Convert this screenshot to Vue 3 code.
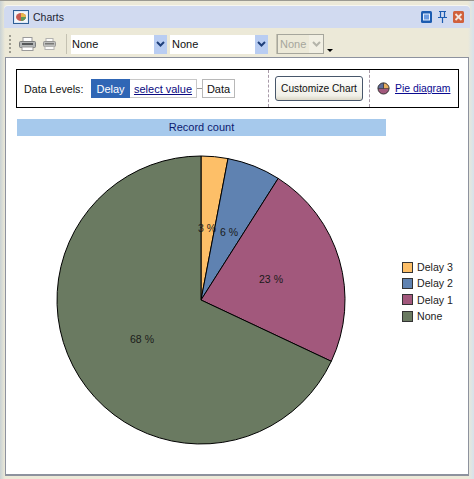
<script setup>
const cx = 201, cy = 300, r = 144
const pt = (deg) => {
  const a = (deg * Math.PI) / 180
  return [cx + r * Math.sin(a), cy - r * Math.cos(a)]
}
const slice = (from, to) => {
  const [x1, y1] = pt(from)
  const [x2, y2] = pt(to)
  const large = to - from > 180 ? 1 : 0
  return `M${cx} ${cy} L${x1.toFixed(1)} ${y1.toFixed(1)} A${r} ${r} 0 ${large} 1 ${x2.toFixed(1)} ${y2.toFixed(1)} Z`
}
const slices = [
  { name: 'Delay 3', color: '#fdbf68', from: 0, to: 10.8, label: '3 %', lx: 207, ly: 232 },
  { name: 'Delay 2', color: '#5f82b1', from: 10.8, to: 32.4, label: '6 %', lx: 229, ly: 236 },
  { name: 'Delay 1', color: '#a2587c', from: 32.4, to: 115.2, label: '23 %', lx: 271, ly: 283 },
  { name: 'None', color: '#6a7a61', from: 115.2, to: 360, label: '68 %', lx: 142, ly: 343 },
]
</script>

<template>
  <div class="window">
    <div class="title">
      <svg class="app-icon" width="16" height="14" viewBox="0 0 16 14">
        <rect x="0.5" y="0.5" width="15" height="13" fill="#dfe8f5" stroke="#2f5f96" />
        <rect x="2" y="2" width="12" height="10" fill="#f4f6f8" />
        <ellipse cx="8" cy="7" rx="5" ry="4" fill="#c85a50" />
        <path d="M8 7L13 7A5 4 0 0 1 8 11Z" fill="#5f9a5a" />
        <path d="M8 7L8 3A5 4 0 0 1 13 7Z" fill="#e8b84a" />
      </svg>
      <span class="title-text">Charts</span>
      <span class="title-buttons">
        <svg width="11" height="12" viewBox="0 0 11 12"><rect width="11" height="12" rx="1.500" fill="#1d5cb0" /><rect x="2.500" y="3" width="6" height="6" fill="#6d9be0" stroke="#e6eefb" /></svg>
        <svg width="11" height="12" viewBox="0 0 11 12"><path d="M2 .5H9M3.500 .5V6M7.500 .5V6M1 6.500H10M5.500 6.500V12" fill="none" stroke="#1d5cb0" stroke-width="1.200" /></svg>
        <svg width="11" height="12" viewBox="0 0 11 12"><rect width="11" height="12" rx="1.500" fill="#d0603c" /><path d="M2.500 3L8.500 9M8.500 3L2.500 9" stroke="#f3e6e0" stroke-width="1.800" /></svg>
      </span>
    </div>

    <div class="toolbar">
      <span class="grip"></span>
      <svg class="printer" width="17" height="14" viewBox="0 0 17 14">
        <rect x="4" y="0.5" width="9" height="4" fill="#fff" stroke="#9a9a9a" />
        <rect x="0.5" y="4.500" width="16" height="6" rx="1" fill="#b5b8b8" stroke="#7d7f7f" />
        <rect x="3" y="6" width="11" height="2" fill="#55585a" />
        <rect x="3" y="10" width="11" height="3.500" fill="#fff" stroke="#9a9a9a" />
      </svg>
      <svg class="printer small" width="13" height="12" viewBox="0 0 13 12">
        <rect x="3" y="0.5" width="7" height="3" fill="#fff" stroke="#aaa" />
        <rect x="0.500" y="3.500" width="12" height="5" rx="1" fill="#b8baba" stroke="#888" />
        <rect x="2" y="5" width="9" height="1.500" fill="#666" />
        <rect x="2" y="8.500" width="9" height="3" fill="#fff" stroke="#aaa" />
      </svg>
      <span class="tb-sep first"></span>
      <div class="select one">
        <span>None</span>
        <span class="arrow"><svg width="9" height="6" viewBox="0 0 9 6"><path d="M1 1L4.500 4.500L8 1" fill="none" stroke="#1f3f7a" stroke-width="2" /></svg></span>
      </div>
      <div class="select two">
        <span>None</span>
        <span class="arrow"><svg width="9" height="6" viewBox="0 0 9 6"><path d="M1 1L4.500 4.500L8 1" fill="none" stroke="#1f3f7a" stroke-width="2" /></svg></span>
      </div>
      <span class="tb-sep second"></span>
      <div class="select-off">
        <span>None</span>
        <span class="arrow-off"><svg width="9" height="6" viewBox="0 0 9 6"><path d="M1 1L4.500 4.500L8 1" fill="none" stroke="#b4b4aa" stroke-width="2" /></svg></span>
      </div>
      <span class="more"></span>
    </div>

    <div class="content">
      <div class="panel">
        <div class="levels">
          <span class="levels-label">Data Levels:</span>
          <span class="chip active">Delay</span>
          <a class="chip link">select value</a>
          <span class="conn"></span>
          <span class="chip plain">Data</span>
        </div>
        <div class="custom"><button class="btn">Customize Chart</button></div>
        <div class="diagram">
          <svg width="13" height="13" viewBox="0 0 13 13">
            <circle cx="6.500" cy="6.500" r="5.500" fill="#a2587c" stroke="#333" />
            <path d="M6.500 6.500L6.500 1A5.500 5.500 0 0 1 12 6.500Z" fill="#e8b060" stroke="#333" stroke-width=".6" />
            <path d="M6.500 6.500L1 6.500A5.500 5.500 0 0 1 6.500 1Z" fill="#5f6f9a" stroke="#333" stroke-width=".6" />
          </svg>
          <a class="pie-link">Pie diagram</a>
        </div>
      </div>

      <div class="chart-title">Record count</div>

      <div class="chart-row">
        <svg class="pie" width="384" height="337" viewBox="17 136 384 337">
          <path v-for="s in slices" :key="s.name" :d="slice(s.from, s.to)" :fill="s.color" stroke="#000" stroke-width="1" />
          <text v-for="s in slices" :key="s.label" :x="s.lx" :y="s.ly" class="pct" text-anchor="middle">{{ s.label }}</text>
        </svg>
        <ul class="legend">
          <li v-for="s in slices" :key="s.name">
            <i class="swatch" :style="{ background: s.color }"></i>{{ s.name }}
          </li>
        </ul>
      </div>
    </div>
  </div>
</template>

<style scoped>
.window {
  width: 474px;
  height: 479px;
  box-sizing: border-box;
  padding: 5px 0 0;
  background: linear-gradient(90deg, #c9d2d4 0, #ece9d8 5px, #ece9d8 468px, #d6e2ec 474px);
  border-top: 1px solid #9b9a92;
  font-family: "Liberation Sans", Arial, sans-serif;
  font-size: 11px;
  color: #111;
  display: flex;
  flex-direction: column;
  overflow: hidden;
}
.title {
  height: 22px;
  flex: none;
  margin: 0 4px;
  padding: 0 6px 0 9px;
  background: #d1daf0;
  border-radius: 4px 4px 0 0;
  box-shadow: 0 -1px 0 #f6f6f0;
  display: flex;
  align-items: center;
  gap: 4px;
}
.title-text {
  color: #1c2433;
  font-size: 10.500px;
}
.title-buttons {
  margin-left: auto;
  display: flex;
  gap: 5px;
}
.toolbar {
  height: 29px;
  flex: none;
  box-sizing: border-box;
  margin: 0 5px;
  padding: 3px 0 0 4px;
  display: flex;
  align-items: center;
}
.grip {
  width: 2px;
  height: 18px;
  background: repeating-linear-gradient(180deg, #9d9c90 0 2px, transparent 2px 4px);
}
.printer {
  margin-left: 8px;
}
.printer.small {
  margin-left: 7px;
  opacity: 0.85;
}
.tb-sep {
  width: 1px;
  height: 20px;
  background: #c5c2b2;
}
.tb-sep.first {
  margin: 0 4px 0 10px;
}
.tb-sep.second {
  margin: 0 0 0 8px;
}
.select {
  height: 19px;
  background: #fff;
  display: flex;
  align-items: center;
  justify-content: space-between;
  padding-left: 1px;
  box-sizing: border-box;
}
.select.one {
  width: 96px;
  margin-right: 3px;
}
.select.two {
  width: 98px;
  padding-left: 2px;
}
.arrow {
  width: 13px;
  height: 19px;
  background: #b9cdf2;
  display: flex;
  align-items: center;
  justify-content: center;
}
.select-off {
  width: 47px;
  height: 20px;
  box-sizing: border-box;
  border: 1px solid #a6a69c;
  background: #ece9d8;
  color: #a6a69c;
  display: flex;
  align-items: center;
  justify-content: space-between;
  padding-left: 2px;
}
.arrow-off {
  width: 14px;
  height: 18px;
  background: #f1efe3;
  display: flex;
  align-items: center;
  justify-content: center;
}
.more {
  width: 0;
  height: 0;
  margin: 13px 0 0 3px;
  border-left: 3px solid transparent;
  border-right: 3px solid transparent;
  border-top: 3px solid #000;
}
.content {
  flex: 1;
  margin: 0 5px 3px;
  border: 1px solid #8d929e;
  border-bottom-width: 2px;
  background: #fff;
  min-height: 0;
  padding: 11px 9px 0 10px;
}
.panel {
  height: 39px;
  box-sizing: border-box;
  width: 443px;
  border: 1px solid #000;
  display: flex;
  align-items: stretch;
}
.levels {
  width: 252px;
  flex: none;
  box-sizing: border-box;
  padding-left: 7px;
  display: flex;
  align-items: center;
  border-right: 1px dashed #a89aa8;
}
.levels-label {
  width: 67px;
  flex: none;
  font-size: 10.700px;
}
.chip {
  height: 19px;
  flex: none;
  box-sizing: border-box;
  display: flex;
  align-items: center;
  justify-content: center;
}
.active {
  width: 39px;
  background: #2f66b5;
  color: #fff;
}
.link {
  width: 67px;
  border: 1px solid #c8c8c8;
  border-left: 0;
  color: #0a0a80;
  text-decoration: underline;
}
.conn {
  width: 5px;
  height: 1px;
  flex: none;
  background: #999;
}
.plain {
  width: 33px;
  border: 1px solid #b8b8b8;
}
.custom {
  width: 101px;
  flex: none;
  box-sizing: border-box;
  display: flex;
  align-items: center;
  justify-content: center;
  border-right: 1px dashed #a89aa8;
}
.btn {
  width: 88px;
  height: 25px;
  padding: 0;
  border: 1px solid #47566a;
  border-radius: 3px;
  background: linear-gradient(180deg, #fff, #f1f0e8 80%, #dcd8c8);
  font: inherit;
  font-size: 10.200px;
  color: #111;
  white-space: nowrap;
}
.diagram {
  display: flex;
  align-items: center;
  padding-left: 7px;
  gap: 5px;
  white-space: nowrap;
}
.pie-link {
  color: #0a0a90;
  text-decoration: underline;
  font-size: 10.400px;
}
.chart-title {
  width: 369px;
  height: 17px;
  margin-top: 11px;
  margin-left: 1px;
  background: #a6c9ec;
  color: #0c1a70;
  text-align: center;
  line-height: 17px;
}
.chart-row {
  display: flex;
  margin-left: 1px;
}
.pie {
  display: block;
  flex: none;
}
.pct {
  font-size: 10.500px;
  fill: #1a1a1a;
}
.legend {
  list-style: none;
  margin: 123px 0 0 1px;
  padding: 0;
  font-size: 10.600px;
}
.legend li {
  height: 16.300px;
  display: flex;
  align-items: center;
  gap: 4px;
  color: #222;
  white-space: nowrap;
}
.swatch {
  width: 9px;
  height: 9px;
  border: 1px solid #333;
  display: block;
}
</style>
